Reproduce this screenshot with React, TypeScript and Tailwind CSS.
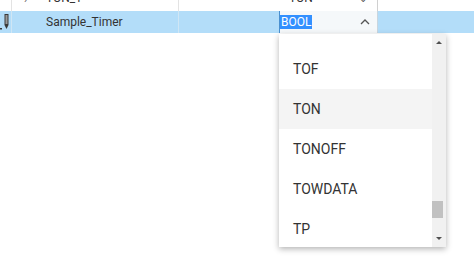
import React from "react";

const items = ["TOF", "TON", "TONOFF", "TOWDATA", "TP"];

export default function App() {
  return (
    <div
      className="relative w-[474px] h-[261px] overflow-hidden bg-white text-[#333333]"
      style={{ fontFamily: "Roboto, 'Liberation Sans', Arial, sans-serif" }}
    >
      {/* partial top row */}
      <div className="flex h-[11px] overflow-hidden items-end">
        <div className="w-[12px] h-full border-r border-[#e3e3e3]" />
        <div className="relative w-[167px] h-full border-r border-[#e3e3e3] overflow-hidden">
          <span className="absolute left-[12px] bottom-[6px] text-[12px] leading-none text-[#666]">›</span>
          <span className="absolute left-[34px] bottom-[7px] text-[12px] leading-[12px]">TON_T</span>
        </div>
        <div className="w-[100px] h-full" />
        <div className="relative w-[99px] h-full bg-white border-r border-[#d0d0d0] overflow-hidden">
          <span className="absolute left-[10px] bottom-[7px] text-[12px] leading-[12px]">TON</span>
          <span className="absolute left-[80px] bottom-[7px] text-[10px] leading-none text-[#555]">⌄</span>
        </div>
      </div>
      {/* selected row */}
      <div className="flex h-[22px] bg-[#b3ddf9]">
        <div className="w-[12px] h-full border-r border-[#cfe6f5] relative">
          <svg width="12" height="22" viewBox="0 0 12 22" className="absolute left-0 top-0">
            <path d="M4.5 3 h4 v11 l-2 4 l-2 -4 z" fill="#3a3a3a" />
            <rect x="5.5" y="4" width="2" height="9" fill="#9a9a9a" />
            <path d="M0 17 h2 v1.5 h-2 z" fill="#3a3a3a" />
          </svg>
        </div>
        <div className="w-[167px] h-full border-r border-[#cfe6f5] flex items-center pl-[34px] text-[12px]">
          Sample_Timer
        </div>
        <div className="w-[100px] h-full" />
        <div className="w-[99px] h-full bg-[#f5f8fa] border-l border-[#4a90d0] border-r border-r-[#c9d6df] flex items-center justify-between pr-[7px]">
          <span className="bg-[#3390ff] text-white text-[12px] leading-[14px] px-[1px]">BOOL</span>
          <svg width="10" height="6" viewBox="0 0 10 6">
            <path d="M1 5 L5 1 L9 5" fill="none" stroke="#555" strokeWidth="1.3" />
          </svg>
        </div>
      </div>

      {/* dropdown menu */}
      <div className="absolute left-[279px] top-[34px] w-[167px] h-[213px] bg-white shadow-[0_2px_6px_rgba(0,0,0,0.3)] flex overflow-hidden">
        <div className="flex-1 flex flex-col pt-[15px]">
          {items.map((t) => (
            <div
              key={t}
              className={`h-[40px] shrink-0 flex items-center pl-[14px] text-[14px] ${t === "TON" ? "bg-[#f4f4f4]" : ""}`}
            >
              {t}
            </div>
          ))}
        </div>
        <div className="w-[14px] h-full bg-[#f1f1f1] flex flex-col items-center">
          <svg width="14" height="14" viewBox="0 0 14 14" className="mt-[1px]">
            <path d="M4 9 L7 6 L10 9 Z" fill="#505050" />
          </svg>
          <div className="flex-1" />
          <div className="w-[11px] h-[17px] bg-[#c1c1c1] mr-[3px] mb-[14px]" />
          <svg width="14" height="14" viewBox="0 0 14 14" className="mb-[1px]">
            <path d="M4 5 L7 8 L10 5 Z" fill="#505050" />
          </svg>
        </div>
      </div>
    </div>
  );
}
